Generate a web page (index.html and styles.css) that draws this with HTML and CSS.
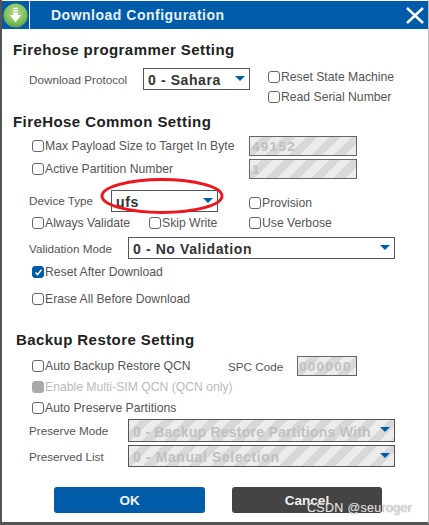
FILE: index.html
```html
<!DOCTYPE html>
<html lang="en">
<head>
    <meta charset="UTF-8">
    <title>Download Configuration</title>
    <link rel="stylesheet" href="styles.css">
</head>
<body>
    <div class="window">
        <div class="titlebar">
            <div class="app-icon">
                <svg width="25" height="25" viewBox="0 0 26 26">
                    <defs>
                        <radialGradient id="orb" cx="50%" cy="35%" r="65%">
                            <stop offset="0" stop-color="#b5d98a"/>
                            <stop offset="0.7" stop-color="#7fbf5a"/>
                            <stop offset="1" stop-color="#5fa048"/>
                        </radialGradient>
                    </defs>
                    <circle cx="13" cy="13" r="12.5" fill="url(#orb)"/>
                    <path d="M10.5 5h5v1.2h-5zM10.5 7.4h5v1.2h-5zM10.5 9.8h5v2.6h3.5L13 20l-6-7.600h3.500z" fill="#fff"/>
                </svg>
            </div>
            <div class="title">Download Configuration</div>
            <svg class="close" width="20" height="20" viewBox="0 0 20 20">
                <path d="M2 3l16 15M18 3L2 18" stroke="#fff" stroke-width="2.400" fill="none"/>
            </svg>
        </div>

        <div class="content">
            <h2 class="heading h-programmer">Firehose programmer Setting</h2>
            <div class="row protocol-row">
                <span class="label protocol-label">Download Protocol</span>
                <div class="select protocol-select"><span>0 - Sahara</span><i class="caret"></i></div>
                <div class="stack">
                    <label class="check"><i class="box"></i>Reset State Machine</label>
                    <label class="check"><i class="box"></i>Read Serial Number</label>
                </div>
            </div>

            <h2 class="heading h-common">FireHose Common Setting</h2>
            <div class="row field-row first-field">
                <label class="check wide"><i class="box"></i>Max Payload Size to Target In Byte</label>
                <div class="input hatch">49152</div>
            </div>
            <div class="row field-row second-field">
                <label class="check wide"><i class="box"></i>Active Partition Number</label>
                <div class="input hatch">1</div>
            </div>
            <div class="row device-row">
                <span class="label device-label">Device Type</span>
                <div class="select device-select"><span>ufs</span><i class="caret"></i></div>
                <label class="check provision"><i class="box"></i>Provision</label>
            </div>
            <div class="row options-row">
                <label class="check always"><i class="box"></i>Always Validate</label>
                <label class="check skip"><i class="box"></i>Skip Write</label>
                <label class="check"><i class="box"></i>Use Verbose</label>
            </div>
            <div class="row validation-row">
                <span class="label mode-label">Validation Mode</span>
                <div class="select long-select"><span>0 - No Validation</span><i class="caret"></i></div>
            </div>
            <div class="row reset-row">
                <label class="check"><i class="box checked"><svg width="9" height="9" viewBox="0 0 9 9"><path d="M1.500 4.500l2 2.200 4-5" stroke="#fff" stroke-width="1.500" fill="none"/></svg></i>Reset After Download</label>
            </div>
            <div class="row erase-row">
                <label class="check"><i class="box"></i>Erase All Before Download</label>
            </div>

            <h2 class="heading h-backup">Backup Restore Setting</h2>
            <div class="row backup-row">
                <label class="check backup-check"><i class="box"></i>Auto Backup Restore QCN</label>
                <span class="label spc-label">SPC Code</span>
                <div class="input hatch spc-input">000000</div>
            </div>
            <div class="row sim-row">
                <label class="check disabled"><i class="box filled"></i>Enable Multi-SIM QCN (QCN only)</label>
            </div>
            <div class="row preserve-row">
                <label class="check"><i class="box"></i>Auto Preserve Partitions</label>
            </div>
            <div class="row mode-row">
                <span class="label mode-label">Preserve Mode</span>
                <div class="select long-select hatch tall"><span class="clip">0 - Backup Restore Partitions With</span><i class="caret"></i></div>
            </div>
            <div class="row list-row">
                <span class="label mode-label">Preserved List</span>
                <div class="select long-select hatch"><span>0 - Manual Selection</span><i class="caret"></i></div>
            </div>

            <div class="buttons">
                <button class="btn btn-ok">OK</button>
                <button class="btn btn-cancel">Cancel</button>
            </div>
        </div>

        <!-- red marker someone drew over the screenshot -->
        <svg class="marker" width="128" height="42" viewBox="0 0 128 42">
            <ellipse cx="64" cy="21" rx="60" ry="16.500" fill="none" stroke="#f0141c" stroke-width="3"/>
        </svg>
        <div class="watermark">CSDN @seuroger</div>
    </div>
</body>
</html>
```

FILE: styles.css
```css
html, body {
    margin: 0;
    padding: 0;
    background: #fff;
}
.window {
    position: relative;
    width: 429px;
    height: 525px;
    box-sizing: border-box;
    padding-top: 1px;
    border-left: 2px solid #555;
    border-right: 1px solid #bbb;
    border-bottom: 3px solid #555;
    font-family: "Liberation Sans", Arial, sans-serif;
    color: #555;
    overflow: hidden;
}
.titlebar {
    display: flex;
    align-items: center;
    height: 28px;
    margin-left: -2px;
    margin-right: -1px;
    background: #005ca8;
    color: #e8f0f8;
}
.app-icon {
    display: flex;
    align-items: center;
    width: 30px;
    height: 28px;
    padding-left: 3px;
    box-sizing: border-box;
    border-right: 1px solid #e8f0f8;
}
.title {
    margin-left: 21px;
    font-size: 14px;
    font-weight: bold;
    letter-spacing: 0.500px;
}
.close {
    margin-left: auto;
    margin-right: 4px;
}
.heading {
    height: 18px;
    margin: 0;
    padding-left: 11px;
    font-size: 15px;
    line-height: 18px;
    font-weight: bold;
    letter-spacing: 0.430px;
    color: #222;
}
.h-programmer { margin-top: 12px; }
.h-common { margin-top: 7px; }
.h-backup { margin-top: 23px; padding-left: 14px; }

.row {
    display: flex;
    align-items: center;
    padding-left: 30px;
}
.label {
    font-size: 11.700px;
    white-space: nowrap;
}
.check {
    display: flex;
    align-items: center;
    height: 18px;
    font-size: 12.200px;
    white-space: nowrap;
}
.box {
    display: flex;
    align-items: center;
    justify-content: center;
    flex: none;
    width: 10px;
    height: 10px;
    margin-right: 1px;
    border: 1px solid #666;
    border-radius: 3px;
    background: #fff;
}
.box.checked {
    border-color: #005ca8;
    background: #005ca8;
}
.box.filled {
    border-color: #aaa;
    background: #aaa;
}
.check.disabled {
    color: #bbb;
}

.select {
    position: relative;
    display: flex;
    align-items: center;
    box-sizing: border-box;
    height: 22px;
    padding-top: 2px;
    padding-left: 4px;
    border: 1px solid #555;
    background: #fff;
    color: #333;
    font-size: 14px;
    font-weight: bold;
    letter-spacing: 0.600px;
    white-space: nowrap;
}
.caret {
    position: absolute;
    right: 4px;
    top: 7px;
    width: 0;
    height: 0;
    border-left: 5px solid transparent;
    border-right: 5px solid transparent;
    border-top: 5px solid #005ca8;
}
.input {
    box-sizing: border-box;
    width: 108px;
    height: 20px;
    padding-left: 2px;
    border: 1px solid #666;
    font-size: 13.500px;
    font-weight: bold;
    line-height: 20px;
    letter-spacing: 1.300px;
    color: #c8c8c8;
}
.hatch {
    background: repeating-linear-gradient(135deg, #ececec 0 8px, #d8d8d8 8px 16px);
    color: #c0c0c0;
}
.clip {
    overflow: hidden;
    width: 244px;
    letter-spacing: 0.250px;
}

/* rows, top to bottom */
.protocol-row {
    align-items: flex-start;
    height: 38px;
    margin-top: 9px;
    padding-left: 27px;
}
.protocol-label {
    width: 114px;
    line-height: 24px;
}
.protocol-select { width: 107px; }
.stack {
    display: flex;
    flex-direction: column;
    gap: 2px;
    margin-left: 18px;
}
.first-field { margin-top: 5px; }
.second-field { margin-top: 3px; }
.wide { width: 217px; }

.device-row {
    margin-top: 11px;
    height: 22px;
    padding-left: 27px;
}
.device-label { width: 82px; margin-top: -1px; }
.device-select { width: 107px; }
.provision { margin-left: 31px; margin-top: 3px; }

.options-row { margin-top: 2px; }
.always { width: 117px; }
.skip { width: 100px; }

.validation-row {
    margin-top: 5px;
    padding-left: 27px;
}
.mode-label { width: 99px; }
.long-select { width: 267px; }

.reset-row { margin-top: 4px; }
.erase-row { margin-top: 9px; }

.backup-row { margin-top: 7px; height: 20px; }
.backup-check { width: 196px; }
.spc-label { width: 69px; }
.spc-input { width: 60px; padding-left: 1px; }
.sim-row { margin-top: 2px; }
.preserve-row { margin-top: 3px; }
.mode-row { margin-top: 2px; padding-left: 27px; }
.list-row { margin-top: 3px; padding-left: 27px; }
.tall { height: 23px; }

.buttons {
    display: flex;
    gap: 27px;
    margin-top: 20px;
    padding-left: 52px;
}
.btn {
    width: 151px;
    height: 26px;
    border: none;
    border-radius: 3px;
    color: #f2f2f2;
    font-family: inherit;
    font-size: 13.500px;
    font-weight: bold;
}
.btn-ok { background: #005ca8; }
.btn-cancel { width: 150px; background: #444; }

.marker {
    position: absolute;
    left: 96px;
    top: 175px;
}
.watermark {
    position: absolute;
    left: 305px;
    top: 501px;
    font-size: 12.500px;
    color: #e6e6e6;
    text-shadow: 0 0 1px #666;
    letter-spacing: 0.300px;
}
```
